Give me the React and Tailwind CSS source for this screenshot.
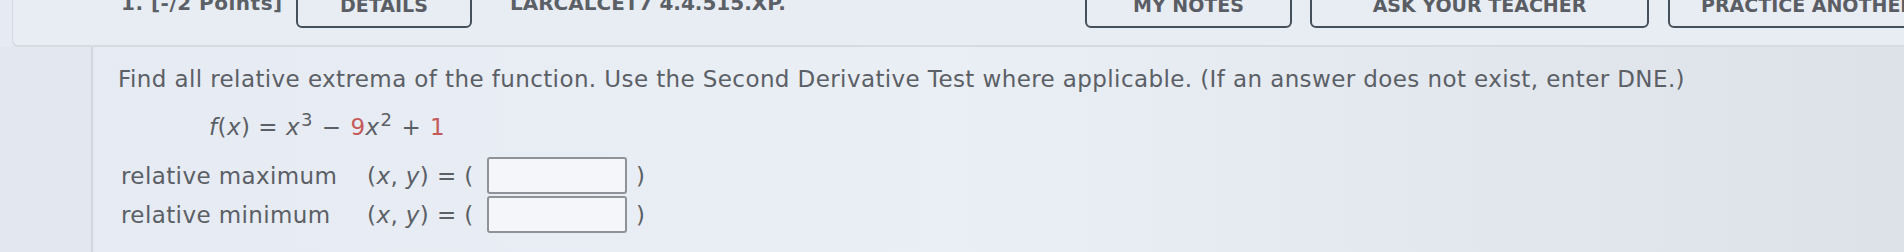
/**
 * Homework question card: header strip with action buttons, then the prompt,
 * the function and two answer rows for the relative extrema.
 */

const font = { fontFamily: '"DejaVu Sans", Verdana, sans-serif' }

function HeaderButton({ label, className = '' }) {
  return (
    <div
      className={`h-[48px] shrink-0 rounded-[6px] border-2 border-[#46505a] pt-[13px] text-center text-[19px] font-bold leading-[20px] text-[#5a5e64] ${className}`}
    >
      {label}
    </div>
  )
}

function AnswerRow({ label }) {
  return (
    <div className="flex h-[39px] items-center">
      <span className="w-[246px] shrink-0">{label}</span>
      <span className="w-[120px] shrink-0">
        (<i>x</i>, <i>y</i>) = (
      </span>
      <span className="h-[37px] w-[140px] shrink-0 rounded-[3px] border-2 border-[#8f9398] bg-[#f4f6f9]" />
      <span className="ml-[9px]">)</span>
    </div>
  )
}

export default function App() {
  return (
    <div
      className="h-[252px] w-[1904px] overflow-hidden bg-linear-to-r from-[#e6eaf2] via-[#eaeef5] to-[#dde1e8] text-[#5b5f66]"
      style={font}
    >
      {/* header strip, its upper half is cut off by the frame */}
      <div className="ml-[12px] h-[47px] overflow-hidden rounded-bl-[6px] border-b-2 border-l border-[#d6dbe2] bg-[#e8ecf3]">
        <div className="-mt-[20px] flex items-start">
          <div className="w-[283px] shrink-0 pl-[108px] pt-[13px] text-[20px] font-bold leading-[20px] tracking-[0.5px]">
            1. [-/2 Points]
          </div>
          <HeaderButton label="DETAILS" className="w-[176px]" />
          <div className="ml-[38px] w-[575px] shrink-0 pt-[13px] text-[20px] font-bold leading-[20px]">
            LARCALCET7 4.4.515.XP.
          </div>
          <HeaderButton label="MY NOTES" className="w-[207px]" />
          <HeaderButton label="ASK YOUR TEACHER" className="ml-[18px] w-[339px]" />
          <HeaderButton label="PRACTICE ANOTHER" className="ml-[19px] w-[280px]" />
        </div>
      </div>

      <div className="flex h-[205px]">
        <div className="w-[93px] shrink-0 border-r-2 border-[#d2d7de] bg-[#e3e7ef]" />
        <div className="pl-[25px] pt-[18px] text-[23px] leading-[28px] tracking-[0.4px]">
          <p>
            Find all relative extrema of the function. Use the Second Derivative Test where
            applicable. (If an answer does not exist, enter DNE.)
          </p>
          <p className="mt-[20px] pl-[91px]">
            <i>f</i>(<i>x</i>)<span className="mx-[8px]">=</span>
            <i>x</i>
            <sup className="ml-[1px] text-[18px]">3</sup>
            <span className="mx-[9px]">−</span>
            <span className="text-[#c45a5a]">9</span>
            <i>x</i>
            <sup className="ml-[1px] text-[18px]">2</sup>
            <span className="mx-[9px]">+</span>
            <span className="text-[#c45a5a]">1</span>
          </p>
          <div className="mt-[15px] pl-[3px]">
            <AnswerRow label="relative maximum" />
            <AnswerRow label="relative minimum" />
          </div>
        </div>
      </div>
    </div>
  )
}
